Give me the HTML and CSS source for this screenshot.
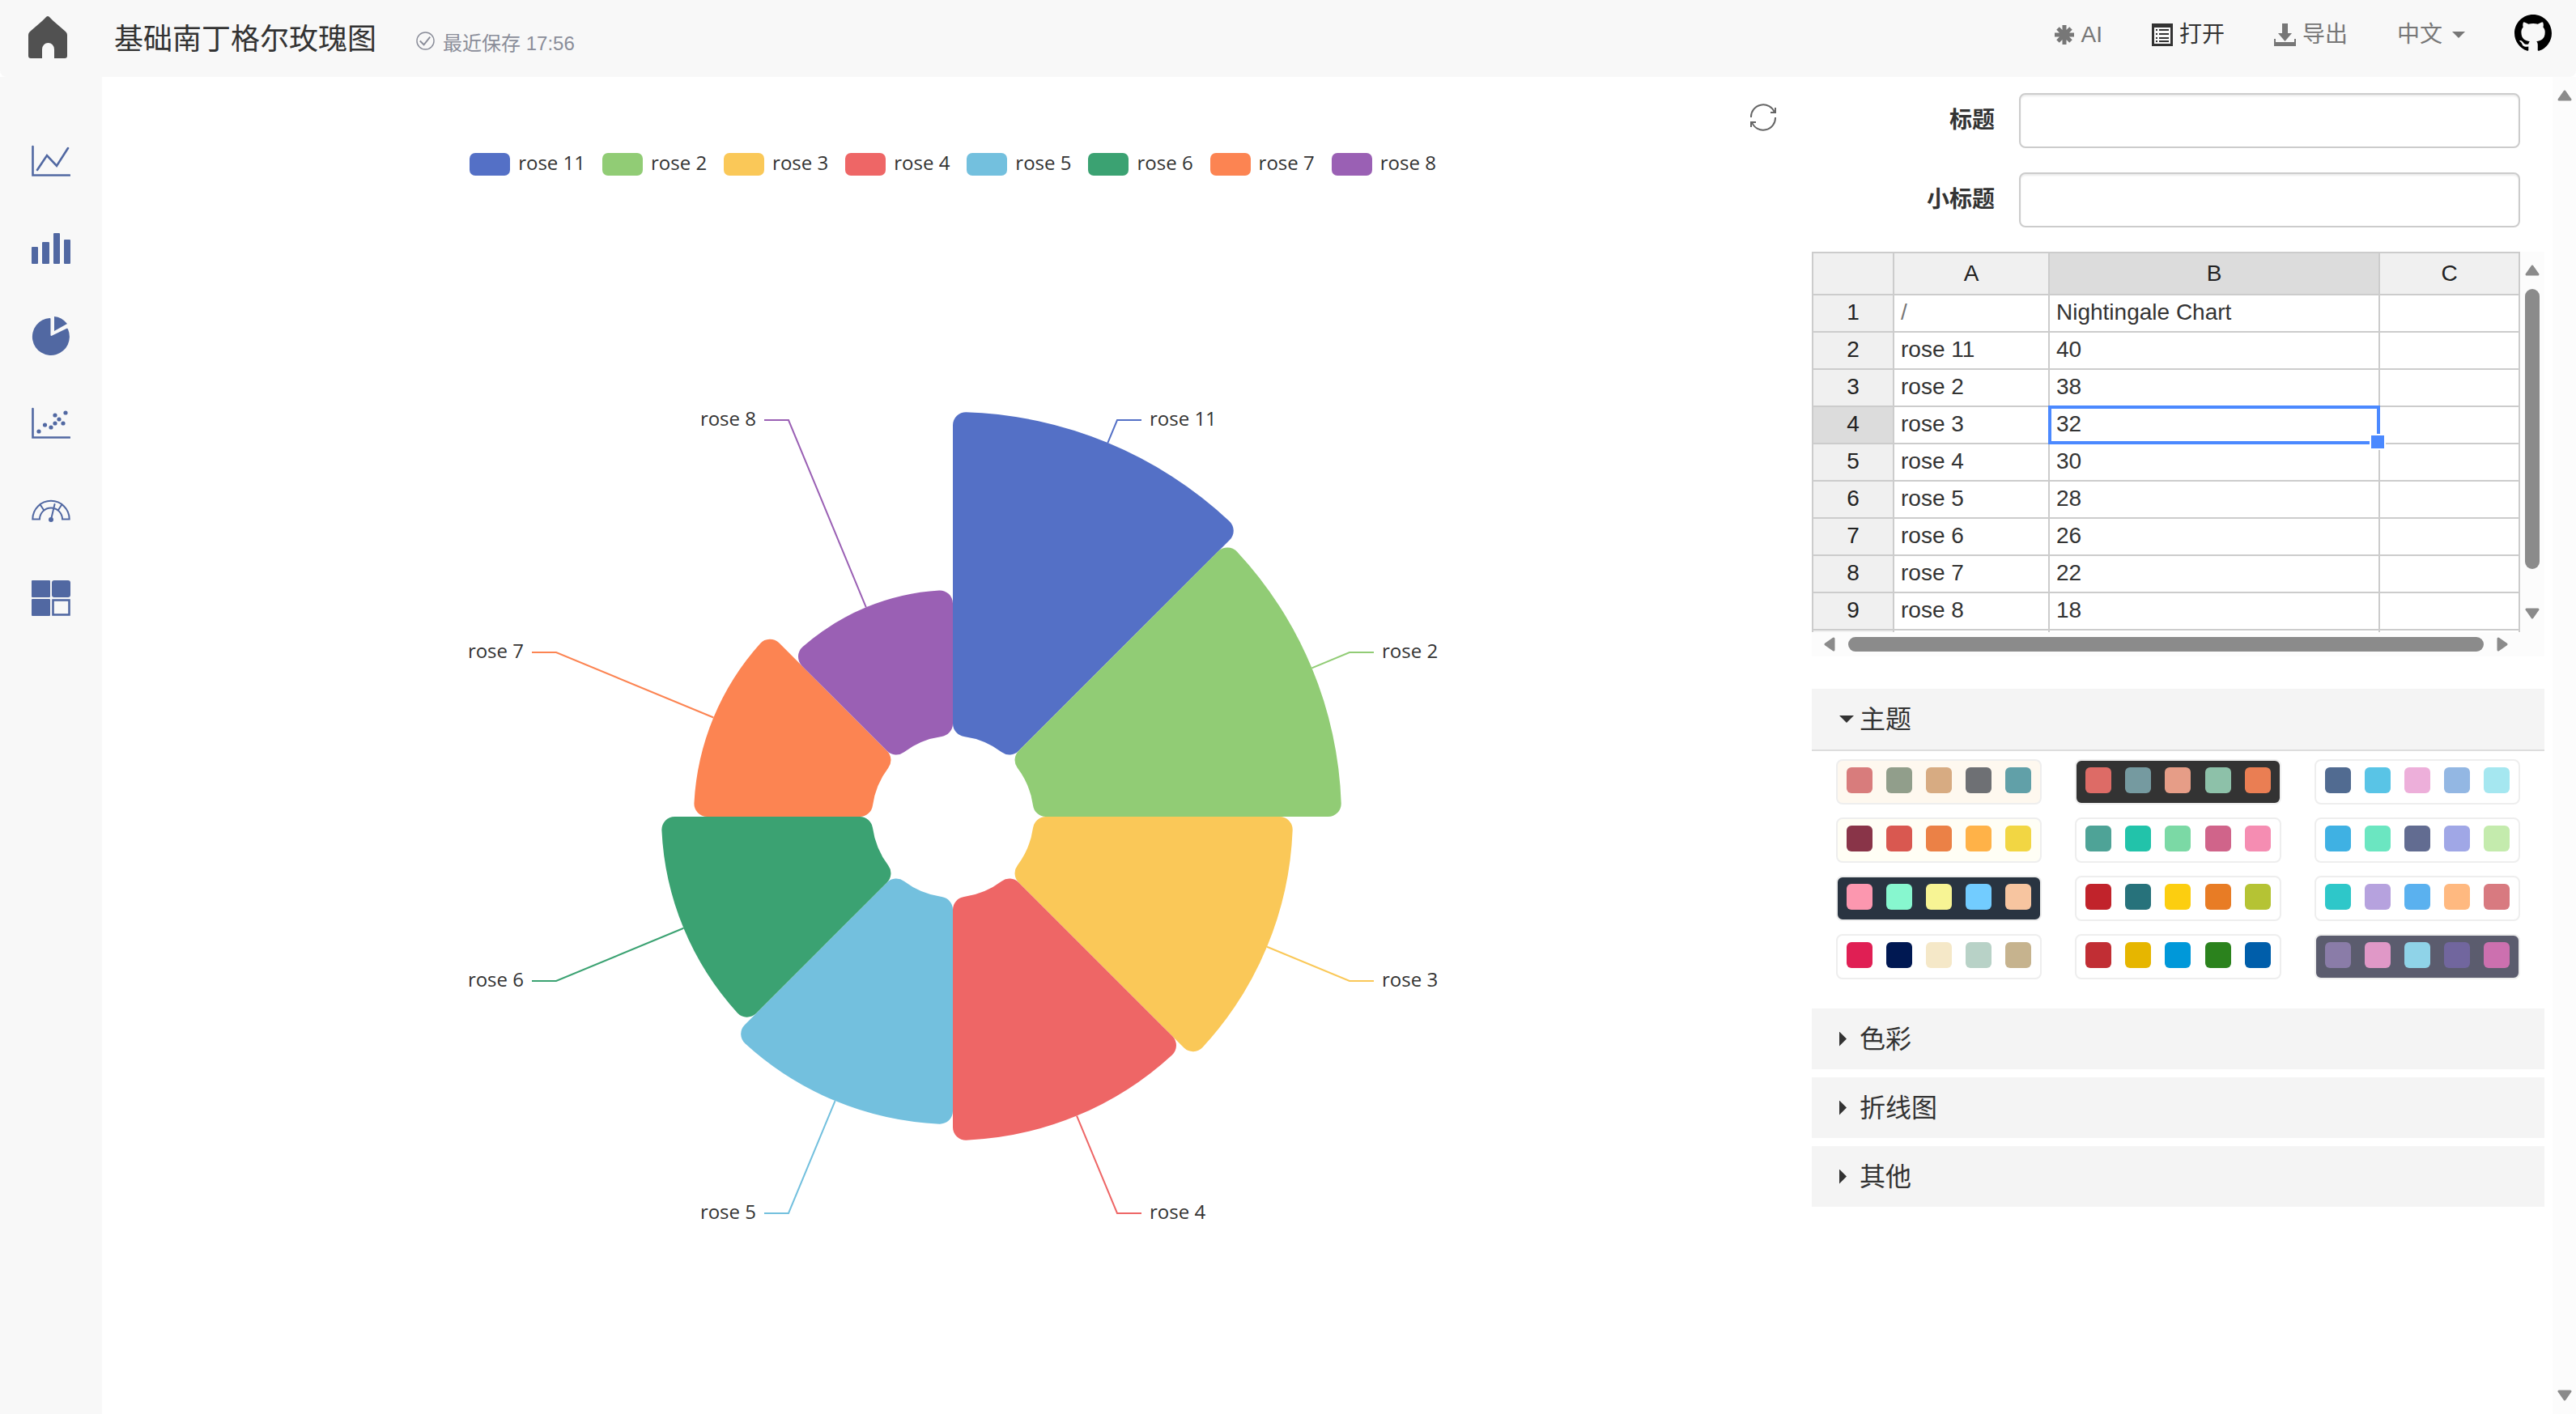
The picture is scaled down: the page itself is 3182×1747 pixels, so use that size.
FILE: index.html
```html
<!DOCTYPE html>
<html lang="zh-CN">
<head>
    <meta charset="UTF-8">
    <title>基础南丁格尔玫瑰图</title>
    <link rel="stylesheet" href="styles.css">
</head>
<body>
<header class="topbar">
    <a class="home" href="#" aria-label="首页">
        <svg width="48" height="52" viewBox="0 0 48 52"><path d="M22 1q2-2 4 0l5 5 15 13q2 2 2 4v26q0 3-3 3H32V41a7.500 8 0 0 0-15 0v11H3q-3 0-3-3V23q0-2 2-4L17 6z" fill="#515151"/></svg>
    </a>
    <h1 class="title">基础南丁格尔玫瑰图</h1>
    <span class="saved">
        <svg width="23" height="23" viewBox="0 0 24 24" fill="none" stroke="#8a8d99" stroke-width="1.500"><circle cx="12" cy="12" r="11"/><path d="M5 12l5 5 8-10" stroke-width="2"/></svg>
        最近保存 17:56
    </span>
    <nav class="menu">
        <a href="#">
            <svg width="24" height="24" viewBox="0 0 24 24" stroke="#777" stroke-width="5"><path d="M12 0v24M0 12h24M4 4l16 16M20 4L4 20"/></svg>
            AI
        </a>
        <a class="active" href="#">
            <svg width="26" height="28" viewBox="0 0 26 28" fill="#333"><path d="M0 0h26v28H0zM3 5v20h20V5z" fill-rule="evenodd"/><path d="M5 7h2v2H5zM9 7h12v2H9zM5 12h2v2H5zM9 12h12v2H9zM5 17h2v2H5zM9 17h12v2H9zM5 21h2v2H5zM9 21h12v2H9z"/></svg>
            打开
        </a>
        <a href="#">
            <svg width="27" height="28" viewBox="0 0 27 28" fill="#777"><path d="M10 0h7v12h5l-8.500 10L5 12h5zM0 19h2v4h23v-4h2v9H0z"/></svg>
            导出
        </a>
        <a class="lang" href="#">
            中文
            <svg width="16" height="8" viewBox="0 0 16 8"><path d="M0 0h16L8 8z" fill="#777"/></svg>
        </a>
        <a class="github" href="#" aria-label="GitHub">
            <svg width="46" height="46" viewBox="0 0 16 16"><path d="M8 0C3.580 0 0 3.580 0 8c0 3.540 2.290 6.530 5.470 7.590.4.070.55-.17.55-.38 0-.19-.01-.82-.01-1.490-2.010.37-2.530-.49-2.690-.94-.09-.23-.48-.94-.82-1.130-.28-.15-.68-.52-.01-.53.63-.01 1.080.58 1.230.82.72 1.210 1.870.87 2.330.66.07-.52.28-.87.51-1.070-1.780-.2-3.640-.89-3.640-3.950 0-.87.31-1.590.82-2.150-.08-.2-.36-1.020.08-2.120 0 0 .67-.21 2.200.82.64-.18 1.320-.27 2-.27s1.360.09 2 .27c1.530-1.040 2.200-.82 2.200-.82.44 1.100.16 1.920.08 2.120.51.56.82 1.270.82 2.150 0 3.070-1.870 3.750-3.650 3.950.29.25.54.73.54 1.480 0 1.070-.01 1.930-.01 2.200 0 .21.15.46.55.38A8.010 8.010 0 0 0 16 8c0-4.420-3.580-8-8-8z"/></svg>
        </a>
    </nav>
</header>
<main class="editor">
    <nav class="sidebar">
        <a href="#" aria-label="折线图"><svg viewBox="0 0 48 48" class="line-icon"><path d="M1.500 6v35.500H47M7 35l12-18 12 13L45 8"/></svg></a>
        <a href="#" aria-label="柱状图"><svg viewBox="0 0 48 48"><rect y="22" width="8" height="21" rx="1"/><rect x="13" y="16" width="9" height="27" rx="1"/><rect x="27" y="5" width="8" height="38" rx="1"/><rect x="40" y="13" width="8" height="30" rx="1"/></svg></a>
        <a href="#" aria-label="饼图"><svg viewBox="0 0 48 48"><path d="M22.500 2q1 0 1 1v20q0 1 1 1l18.500-9q1.500-.7 2 .8A23 23 0 1 1 22.500 2zM28 0q9 .5 16 9L28 18z"/></svg></a>
        <a href="#" aria-label="散点图"><svg viewBox="0 0 48 48"><path d="M1.500 6v35.500H47" class="axis"/><circle cx="9" cy="34" r="2.600"/><circle cx="16.500" cy="26" r="2.600"/><circle cx="24" cy="29" r="2.600"/><circle cx="29" cy="14" r="2.600"/><circle cx="34" cy="19" r="2.600"/><circle cx="29" cy="24" r="2.600"/><circle cx="39" cy="24" r="2.600"/><circle cx="42" cy="11" r="2.600"/></svg></a>
        <a href="#" aria-label="仪表盘"><svg viewBox="0 0 48 48"><path d="M1.300 34.500a22.700 22.700 0 0 1 45.400 0H38a14 14 0 0 0-28 0zM11 17l4 6M37 17l-4 6M28.500 16L24 35" class="axis thin"/><circle cx="24" cy="35" r="3"/></svg></a>
        <a href="#" aria-label="其他"><svg viewBox="0 0 48 48"><rect y="2" width="23" height="21" rx="1"/><rect x="25" y="2" width="23" height="21" rx="3"/><rect y="25" width="23" height="21" rx="1"/><rect x="26.500" y="26.500" width="20" height="18" class="axis"/></svg></a>
    </nav>
    <section class="stage">
        <ul class="legend"></ul>
        <svg class="chart"></svg>
        <button class="refresh" aria-label="刷新">
            <svg width="34" height="34" viewBox="0 0 34 34" fill="none" stroke="#666" stroke-width="2"><path d="M2 17A15 15 0 0 1 31 11M32 17A15 15 0 0 1 3 23M32 5v6h-6M2 29v-6h6"/></svg>
        </button>
    </section>
    <section class="panel">
        <div class="field">
            <label for="title">标题</label>
            <input id="title" type="text">
        </div>
        <div class="field">
            <label for="subtitle">小标题</label>
            <input id="subtitle" type="text">
        </div>
        <div class="sheet">
            <div class="sheet-body">
                <table>
                    <colgroup><col class="col-no"><col class="col-a"><col class="col-b"><col></colgroup>
                    <thead>
                    <tr><th></th><th>A</th><th class="on">B</th><th>C</th></tr>
                    </thead>
                    <tbody>
                    <tr><th>1</th><td class="hint">/</td><td>Nightingale Chart</td><td></td></tr>
                    <tr><th>2</th><td>rose 11</td><td>40</td><td></td></tr>
                    <tr><th>3</th><td>rose 2</td><td>38</td><td></td></tr>
                    <tr><th class="on">4</th><td>rose 3</td><td class="current">32</td><td></td></tr>
                    <tr><th>5</th><td>rose 4</td><td>30</td><td></td></tr>
                    <tr><th>6</th><td>rose 5</td><td>28</td><td></td></tr>
                    <tr><th>7</th><td>rose 6</td><td>26</td><td></td></tr>
                    <tr><th>8</th><td>rose 7</td><td>22</td><td></td></tr>
                    <tr><th>9</th><td>rose 8</td><td>18</td><td></td></tr>
                    <tr><th></th><td></td><td></td><td></td></tr>
                    </tbody>
                </table>
            </div>
            <div class="vbar">
                <svg class="arrow" viewBox="0 0 18 14"><path d="M9 2l7 10H2z"/></svg>
                <i class="thumb"></i>
                <svg class="arrow" viewBox="0 0 18 14"><path d="M9 12L2 2h14z"/></svg>
            </div>
            <div class="hbar">
                <svg class="arrow" viewBox="0 0 14 18"><path d="M2 9l10-7v14z"/></svg>
                <i class="thumb"></i>
                <svg class="arrow" viewBox="0 0 14 18"><path d="M12 9L2 2v14z"/></svg>
            </div>
        </div>
        <details open>
            <summary>主题</summary>
            <div class="themes"></div>
        </details>
        <details><summary>色彩</summary></details>
        <details><summary>折线图</summary></details>
        <details><summary>其他</summary></details>
    </section>
    <div class="vbar page-bar">
        <svg class="arrow" viewBox="0 0 18 14"><path d="M9 2l7 10H2z"/></svg>
        <svg class="arrow" viewBox="0 0 18 14"><path d="M9 12L2 2h14z"/></svg>
    </div>
</main>
<script src="chart.js"></script>
</body>
</html>
```
FILE: styles.css
```css
*{
    box-sizing: border-box;
    margin: 0;
    padding: 0;
}
body{
    display: flex;
    flex-direction: column;
    min-height: 100vh;
    background: #fff;
    color: #333;
    font-family: "Liberation Sans", "Noto Sans CJK SC", sans-serif;
    font-size: 28px;
    line-height: 40px;
}
a{
    color: inherit;
    text-decoration: none;
}
svg{
    display: block;
    flex: none;
}
/*顶部*/
.topbar{
    display: flex;
    align-items: center;
    height: 95px;
    padding: 0 30px 0 35px;
    background: #f8f8f8;
    border-radius: 0 0 8px 8px;
}
.home{
    margin-right: 58px;
    padding-bottom: 4px;
}
.title{
    padding-top: 2px;
    font-size: 36px;
    font-weight: normal;
}
.saved{
    display: flex;
    align-items: center;
    gap: 10px;
    margin-left: 49px;
    padding-top: 12px;
    font-size: 24px;
    color: #8a8d99;
}
.saved svg{
    margin-bottom: 6px;
}
.menu{
    display: flex;
    align-items: center;
    gap: 61px;
    margin-left: auto;
    padding-bottom: 10px;
    color: #777;
}
.menu a{
    display: flex;
    align-items: center;
    gap: 8px;
}
.menu .lang{
    gap: 12px;
}
.menu .active{
    color: #333;
}
.menu .github{
    margin-bottom: 4px;
}
/*主体*/
.editor{
    display: flex;
    flex: 1;
}
.sidebar{
    display: flex;
    flex: none;
    flex-direction: column;
    align-items: center;
    gap: 60px;
    width: 126px;
    padding-top: 80px;
    background: #f8f8f8;
}
.sidebar svg{
    width: 48px;
    height: 48px;
    fill: #5168a2;
}
.sidebar .line-icon,
.sidebar .axis{
    fill: none;
    stroke: #5168a2;
    stroke-width: 2.6;
    stroke-linecap: round;
}
.sidebar .thin{
    stroke-width: 2;
}
/*图表*/
.stage{
    display: flex;
    flex: 1;
    flex-direction: column;
    position: relative;
    font-family: "Open Sans", "Noto Sans", sans-serif;
    font-size: 24px;
}
.legend{
    display: flex;
    justify-content: center;
    gap: 21px;
    padding-top: 86px;
    list-style-type: none;
}
.legend li{
    display: flex;
    align-items: center;
    gap: 10px;
}
.legend i{
    width: 50px;
    height: 28px;
    margin-top: 4px;
    border-radius: 7px;
}
.chart{
    flex: 1;
    width: 100%;
    fill: #333;
}
.chart polyline{
    fill: none;
    stroke-width: 2;
}
.refresh{
    position: absolute;
    top: 33px;
    right: 33px;
    border: 0;
    background: none;
}
/*右侧设置*/
.panel{
    flex: none;
    width: 925px;
    padding: 20px 10px 0;
}
.field{
    display: flex;
    align-items: center;
    gap: 30px;
    margin: 0 30px 30px 0;
}
.field label{
    width: 226px;
    font-weight: bold;
    text-align: right;
}
.field input{
    flex: 1;
    height: 68px;
    padding: 12px 24px;
    border: 2px solid #ccc;
    border-radius: 8px;
    box-shadow: inset 0 2px 2px rgba(0,0,0,.075);
    font: inherit;
}
.sheet{
    display: grid;
    grid-template-columns: 1fr 30px;
    grid-template-rows: 470px 30px;
    margin-bottom: 40px;
    background: #fcfcfc;
}
.sheet-body{
    overflow: hidden;
    background: #fff;
}
table{
    width: 100%;
    table-layout: fixed;
    border-spacing: 0;
}
.col-no{
    width: 102px;
}
.col-a{
    width: 192px;
}
.col-b{
    width: 408px;
}
th, td{
    height: 46px;
    border: solid #ccc;
    border-width: 0 2px 2px 0;
    line-height: 42px;
    vertical-align: top;
}
th{
    background: #f0f0f0;
    color: #222;
    font-weight: normal;
}
th:first-child{
    border-left-width: 2px;
}
thead th{
    height: 54px;
    border-top-width: 2px;
    line-height: 50px;
}
td{
    padding: 0 8px;
}
th.on{
    background: #dcdcdc;
}
.hint{
    color: #777;
}
/*选中单元格*/
.current{
    position: relative;
}
.current::before{
    content: "";
    position: absolute;
    inset: -2px -2px -2px -2px;
    border: 4px solid #4b89ff;
}
.current::after{
    content: "";
    position: absolute;
    right: -9px;
    bottom: -9px;
    width: 16px;
    height: 16px;
    border: 2px solid #fff;
    background: #4b89ff;
}
/*滚动条*/
.vbar, .hbar{
    display: flex;
    align-items: center;
}
.vbar{
    flex-direction: column;
    padding: 16px 0;
}
.hbar{
    padding: 0 15px;
}
.arrow{
    width: 18px;
    height: 14px;
    fill: #8b8b8b;
    stroke: #8b8b8b;
    stroke-width: 3;
    stroke-linejoin: round;
}
.hbar .arrow{
    width: 14px;
    height: 18px;
}
.thumb{
    border-radius: 9px;
    background: #8b8b8b;
}
.vbar .thumb{
    flex: 1;
    width: 18px;
    margin: 16px 0 48px;
}
.hbar .thumb{
    flex: 1;
    height: 18px;
    margin: 0 16px;
}
.page-bar{
    flex: none;
    justify-content: space-between;
    width: 29px;
    background: #fcfcfc;
}
/*折叠面板*/
details{
    margin-bottom: 10px;
}
summary{
    display: flex;
    align-items: center;
    height: 75px;
    padding-left: 34px;
    background: #f4f4f4;
    font-size: 32px;
    list-style: none;
}
summary::before{
    content: "";
    width: 9px;
    height: 18px;
    margin-right: 16px;
    background: #333;
    clip-path: polygon(0 0, 100% 50%, 0 100%);
}
details[open] summary{
    height: 77px;
    border-bottom: 2px solid #ddd;
}
details[open] summary::before{
    width: 18px;
    height: 9px;
    margin-right: 7px;
    clip-path: polygon(0 0, 100% 0, 50% 100%);
}
.themes{
    display: grid;
    grid-template-columns: repeat(3, 1fr);
    gap: 16px 41px;
    padding: 10px 30px 26px;
}
.themes button{
    display: flex;
    justify-content: space-between;
    align-items: flex-start;
    height: 56px;
    padding: 8px 11px;
    border: 2px solid #eee;
    border-radius: 8px;
}
.themes i{
    width: 32px;
    height: 32px;
    border-radius: 6px;
}
```
FILE: chart.js
```js
var data = [
    {name: "rose 11", value: 40, color: "#5470c6"},
    {name: "rose 2", value: 38, color: "#91cc75"},
    {name: "rose 3", value: 32, color: "#fac858"},
    {name: "rose 4", value: 30, color: "#ee6666"},
    {name: "rose 5", value: 28, color: "#73c0de"},
    {name: "rose 6", value: 26, color: "#3ba272"},
    {name: "rose 7", value: 22, color: "#fc8452"},
    {name: "rose 8", value: 18, color: "#9a60b4"}
];
//每个主题：背景色 + 5个颜色
var themes = [
    ["#fef8ef", "#d87c7c", "#919e8b", "#d7ab82", "#6e7074", "#61a0a8"],
    ["#333333", "#dd6b66", "#759aa0", "#e69d87", "#8dc1a9", "#ea7e53"],
    ["#ffffff", "#516b91", "#59c4e6", "#edafda", "#93b7e3", "#a5e7f0"],
    ["#fffef5", "#893448", "#d95850", "#eb8146", "#ffb248", "#f2d643"],
    ["#ffffff", "#4ea397", "#22c3aa", "#7bd9a5", "#d0648a", "#f58db2"],
    ["#ffffff", "#3fb1e3", "#6be6c1", "#626c91", "#a0a7e6", "#c4ebad"],
    ["#293441", "#fc97af", "#87f7cf", "#f7f494", "#72ccff", "#f7c5a0"],
    ["#ffffff", "#c1232b", "#27727b", "#fcce10", "#e87c25", "#b5c334"],
    ["#ffffff", "#2ec7c9", "#b6a2de", "#5ab1ef", "#ffb980", "#d87a80"],
    ["#ffffff", "#e01f54", "#001852", "#f5e8c8", "#b8d2c7", "#c6b38e"],
    ["#ffffff", "#c12e34", "#e6b600", "#0098d9", "#2b821d", "#005eaa"],
    ["#5b5c6e", "#8a7ca8", "#e098c7", "#8fd3e8", "#71669e", "#cc70af"]
];
var inner = 100, outer = 500, corner = 16;
var chart = document.querySelector(".chart");

//极坐标转换，0度朝上，顺时针
function point(cx, cy, r, a){
    return (cx + r * Math.sin(a)).toFixed(2) + " " + (cy - r * Math.cos(a)).toFixed(2);
}
//带圆角的扇形
function sector(cx, cy, r, a0, a1){
    var c = corner;
    var ro = Math.sqrt((r - c) * (r - c) - c * c);
    var ri = Math.sqrt((inner + c) * (inner + c) - c * c);
    var ao = Math.asin(c / (r - c));
    var ai = Math.asin(c / (inner + c));
    var arc = function(rad, flag, rr, a){
        return "A" + rad + " " + rad + " 0 0 " + flag + " " + point(cx, cy, rr, a);
    };
    return "M" + point(cx, cy, ri, a0) +
        "L" + point(cx, cy, ro, a0) +
        arc(c, 1, r, a0 + ao) + arc(r, 1, r, a1 - ao) + arc(c, 1, ro, a1) +
        "L" + point(cx, cy, ri, a1) +
        arc(c, 1, inner, a1 - ai) + arc(inner, 0, inner, a0 + ai) + arc(c, 1, ri, a0) + "Z";
}
function draw(){
    var box = chart.getBoundingClientRect();
    var cx = Math.round(box.width / 2);
    var cy = Math.round(box.height / 2) + 25;
    var step = Math.PI * 2 / data.length;
    var html = "";
    data.forEach(function(d, i){
        var r = inner + (outer - inner) * d.value / 40;
        var mid = (i + 0.5) * step;
        var side = Math.sin(mid) > 0 ? 1 : -1;
        var x = Math.round(cx + (outer + 30) * Math.sin(mid));
        var y = Math.round(cy - (outer + 30) * Math.cos(mid));
        html += '<path fill="' + d.color + '" d="' + sector(cx, cy, r, i * step, (i + 1) * step) + '"/>';
        html += '<polyline stroke="' + d.color + '" points="' + point(cx, cy, r, mid) + ' ' + x + ' ' + y + ' ' + (x + side * 30) + ' ' + y + '"/>';
        html += '<text x="' + (x + side * 40) + '" y="' + (y + 7) + '" text-anchor="' + (side > 0 ? "start" : "end") + '">' + d.name + '</text>';
    });
    chart.innerHTML = html;
}

document.querySelector(".legend").innerHTML = data.map(function(d){
    return '<li><i style="background:' + d.color + '"></i>' + d.name + '</li>';
}).join("");
document.querySelector(".themes").innerHTML = themes.map(function(t, n){
    return '<button aria-label="主题' + (n + 1) + '" style="background:' + t[0] + '">' + t.slice(1).map(function(c){
        return '<i style="background:' + c + '"></i>';
    }).join("") + '</button>';
}).join("");
draw();
window.onresize = draw;
document.querySelector(".refresh").onclick = draw;
```
